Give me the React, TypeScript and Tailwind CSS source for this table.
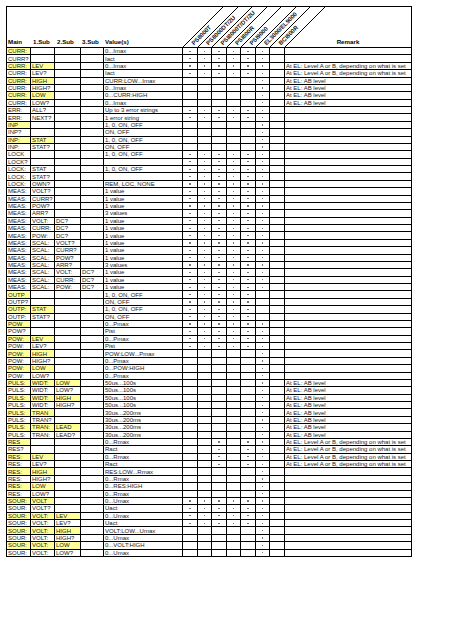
const LA = "At EL: Level A or B, depending on what is set";
const AB = "At EL: AB level";

const DOTS: Record<string, number[]> = {
  A: [1, 1, 1, 1, 1, 1, 0],
  B: [0, 0, 0, 0, 0, 1, 0],
  C: [1, 1, 1, 1, 1, 0, 0],
  D: [0, 0, 1, 0, 1, 1, 0],
};

type Row = [string, string, string, string, string, string, string?];

const rows: Row[] = [
  ["CURR:", "", "", "", "0...Imax", "A"],
  ["CURR?", "", "", "", "Iact", "A"],
  ["CURR:", "LEV", "", "", "0...Imax", "A", LA],
  ["CURR:", "LEV?", "", "", "Iact", "A", LA],
  ["CURR:", "HIGH", "", "", "CURR:LOW...Imax", "B", AB],
  ["CURR:", "HIGH?", "", "", "0...Imax", "B", AB],
  ["CURR:", "LOW", "", "", "0...CURR:HIGH", "B", AB],
  ["CURR:", "LOW?", "", "", "0...Imax", "B", AB],
  ["ERR:", "ALL?", "", "", "Up to 3 error strings", "A"],
  ["ERR:", "NEXT?", "", "", "1 error string", "A"],
  ["INP", "", "", "", "1, 0, ON, OFF", "B"],
  ["INP?", "", "", "", "ON, OFF", "B"],
  ["INP:", "STAT", "", "", "1, 0, ON, OFF", "B"],
  ["INP:", "STAT?", "", "", "ON, OFF", "B"],
  ["LOCK", "", "", "", "1, 0, ON, OFF", "A"],
  ["LOCK?", "", "", "", "", "A"],
  ["LOCK:", "STAT", "", "", "1, 0, ON, OFF", "A"],
  ["LOCK:", "STAT?", "", "", "", "A"],
  ["LOCK:", "OWN?", "", "", "REM, LOC, NONE", "A"],
  ["MEAS:", "VOLT?", "", "", "1 value", "A"],
  ["MEAS:", "CURR?", "", "", "1 value", "A"],
  ["MEAS:", "POW?", "", "", "1 value", "A"],
  ["MEAS:", "ARR?", "", "", "3 values", "A"],
  ["MEAS:", "VOLT:", "DC?", "", "1 value", "A"],
  ["MEAS:", "CURR:", "DC?", "", "1 value", "A"],
  ["MEAS:", "POW:", "DC?", "", "1 value", "A"],
  ["MEAS:", "SCAL:", "VOLT?", "", "1 value", "A"],
  ["MEAS:", "SCAL:", "CURR?", "", "1 value", "A"],
  ["MEAS:", "SCAL:", "POW?", "", "1 value", "A"],
  ["MEAS:", "SCAL:", "ARR?", "", "3 values", "A"],
  ["MEAS:", "SCAL:", "VOLT:", "DC?", "1 value", "A"],
  ["MEAS:", "SCAL:", "CURR:", "DC?", "1 value", "A"],
  ["MEAS:", "SCAL:", "POW:", "DC?", "1 value", "A"],
  ["OUTP", "", "", "", "1, 0, ON, OFF", "C"],
  ["OUTP?", "", "", "", "ON, OFF", "C"],
  ["OUTP:", "STAT", "", "", "1, 0, ON, OFF", "C"],
  ["OUTP:", "STAT?", "", "", "ON, OFF", "C"],
  ["POW", "", "", "", "0...Pmax", "A"],
  ["POW?", "", "", "", "Pist", "A"],
  ["POW:", "LEV", "", "", "0...Pmax", "A"],
  ["POW:", "LEV?", "", "", "Pist", "A"],
  ["POW:", "HIGH", "", "", "POW:LOW...Pmax", "B"],
  ["POW:", "HIGH?", "", "", "0...Pmax", "B"],
  ["POW:", "LOW", "", "", "0...POW:HIGH", "B"],
  ["POW:", "LOW?", "", "", "0...Pmax", "B"],
  ["PULS:", "WIDT:", "LOW", "", "50us...100s", "B", AB],
  ["PULS:", "WIDT:", "LOW?", "", "50us...100s", "B", AB],
  ["PULS:", "WIDT:", "HIGH", "", "50us...100s", "B", AB],
  ["PULS:", "WIDT:", "HIGH?", "", "50us...100s", "B", AB],
  ["PULS:", "TRAN", "", "", "30us...200ms", "B", AB],
  ["PULS:", "TRAN?", "", "", "30us...200ms", "B", AB],
  ["PULS:", "TRAN:", "LEAD", "", "30us...200ms", "B", AB],
  ["PULS:", "TRAN:", "LEAD?", "", "30us...200ms", "B", AB],
  ["RES", "", "", "", "0...Rmax", "D", LA],
  ["RES?", "", "", "", "Ract", "D", LA],
  ["RES:", "LEV", "", "", "0...Rmax", "D", LA],
  ["RES:", "LEV?", "", "", "Ract", "D", LA],
  ["RES:", "HIGH", "", "", "RES:LOW...Rmax", "B"],
  ["RES:", "HIGH?", "", "", "0...Rmax", "B"],
  ["RES:", "LOW", "", "", "0...RES:HIGH", "B"],
  ["RES:", "LOW?", "", "", "0...Rmax", "B"],
  ["SOUR:", "VOLT", "", "", "0...Umax", "A"],
  ["SOUR:", "VOLT?", "", "", "Uact", "A"],
  ["SOUR:", "VOLT:", "LEV", "", "0...Umax", "A"],
  ["SOUR:", "VOLT:", "LEV?", "", "Uact", "A"],
  ["SOUR:", "VOLT:", "HIGH", "", "VOLT:LOW...Umax", "B"],
  ["SOUR:", "VOLT:", "HIGH?", "", "0...Umax", "B"],
  ["SOUR:", "VOLT:", "LOW", "", "0...VOLT:HIGH", "B"],
  ["SOUR:", "VOLT:", "LOW?", "", "0...Umax", "B"],
];

const models = [
  "PS8000T",
  "PS8000DT/2U",
  "PSI8000T/DT/2U",
  "PSI800R",
  "PSI9000",
  "EL3000/EL9000",
  "BCI800R",
];

// centre x of each diagonal line, relative to the inner table edge
const lines = [175.5, 190.5, 204.5, 219.5, 233.5, 248.5, 262.5, 277.5];

const COLS =
  "grid grid-cols-[24px_24px_26px_23px_79px_15px_14px_15px_14px_15px_14px_15px_126px]";

function highlighted(r: Row) {
  const parts = r.slice(0, 4).filter(Boolean) as string[];
  if (r[0].startsWith("LOCK")) return 0;
  if (parts[parts.length - 1].endsWith("?")) return 0;
  return parts.length;
}

function Header() {
  return (
    <div className="relative h-[41px] border-b border-black">
      <div className={`${COLS} h-full items-end pb-[1px] text-[6.2px] font-bold text-black`}>
        <span className="pl-[1px]">Main</span>
        <span className="pl-[2px]">1.Sub</span>
        <span className="pl-[2px]">2.Sub</span>
        <span className="pl-[1px]">3.Sub</span>
        <span className="pl-[1px]">Value(s)</span>
        <span className="col-span-7" />
        <span className="text-center">Remark</span>
      </div>
      <svg
        className="absolute left-0 top-0"
        width="404"
        height="40"
        viewBox="0 0 404 40"
      >
        {lines.map((x) => (
          <line key={x} x1={x} y1={40.5} x2={x + 40.5} y2={0} stroke="#000" strokeWidth="1" />
        ))}
        {models.map((m, i) => {
          const mid = (lines[i] + lines[i + 1]) / 2;
          return (
            <text
              key={m}
              transform={`translate(${mid + 4} ${38.5}) rotate(-45)`}
              fontSize="6"
              fontWeight="bold"
              fill="#111"
              fontFamily="'Liberation Sans', Arial, sans-serif"
            >
              {m}
            </text>
          );
        })}
      </svg>
    </div>
  );
}

function DataRow({ r }: { r: Row }) {
  const hl = highlighted(r);
  const dots = DOTS[r[5]];
  return (
    <div className={`${COLS} h-[7.377px] border-b border-black`}>
      {r.slice(0, 4).map((t, i) => (
        <div
          key={i}
          className={`flex items-center overflow-hidden border-r border-black pl-[1px] leading-none ${
            i < hl ? "bg-[#ffff99]" : ""
          }`}
        >
          {t}
        </div>
      ))}
      <div className="flex items-center overflow-hidden border-r border-black pl-[1px] leading-none">{r[4]}</div>
      {dots.map((d, i) => (
        <div key={i} className="flex items-center justify-center border-r border-black">
          {d ? <span className="h-[1.2px] w-[1.2px] bg-[#777]" /> : null}
        </div>
      ))}
      <div className="flex items-center overflow-hidden pl-[1px] leading-none">{r[6] ?? ""}</div>
    </div>
  );
}

export default function App() {
  return (
    <div className="min-h-[640px] w-[452px] bg-white pl-[6px] pt-[6px] font-['Liberation_Sans',Arial,sans-serif] text-[6px] text-[#222]">
      <div className="w-[406px] border-x border-t border-black">
        <Header />
        {rows.map((r, i) => (
          <DataRow key={i} r={r} />
        ))}
      </div>
    </div>
  );
}
